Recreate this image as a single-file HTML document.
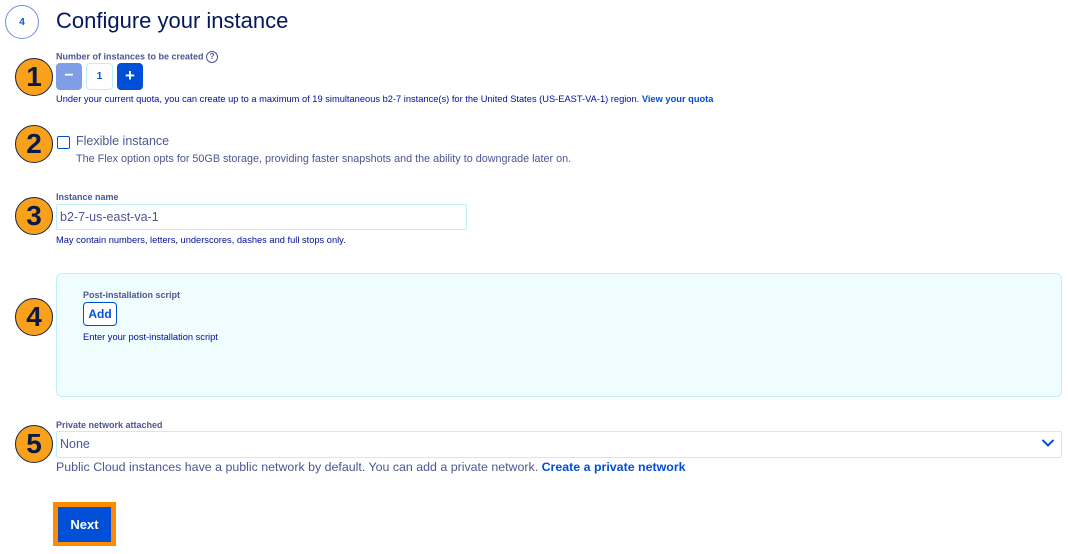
<!DOCTYPE html>
<html><head><meta charset="utf-8"><style>
body{margin:0;width:1068px;height:554px;background:#fff;font-family:"Liberation Sans",sans-serif;color:#4d5693;position:relative;overflow:hidden}
.a{position:absolute}
.badge{position:absolute;width:36px;height:36px;border:1px solid #1a2340;border-radius:50%;background:#f9a11b;color:#0b1a45;font-weight:bold;font-size:28px;display:flex;align-items:center;justify-content:center;left:15px}
.lbl{font-size:9px;font-weight:bold;color:#4d5693}
.sm{font-size:9.3px;color:#000e9c}
.link{color:#0050d7;font-weight:bold}
</style></head><body>
<div class="a" style="left:5px;top:5px;width:32px;height:32px;border:1px solid #6f8fe0;border-radius:50%;display:flex;align-items:center;justify-content:center;font-size:10px;font-weight:bold;color:#0050d7">4</div>
<div class="a" style="left:56px;top:8px;font-size:22px;color:#00185e">Configure your instance</div>

<div class="a lbl" style="left:56px;top:51px">Number of instances to be created <span style="display:inline-block;width:10px;height:10px;border:1px solid #4d5693;border-radius:50%;font-size:8px;text-align:center;line-height:10px;vertical-align:middle">?</span></div>
<div class="badge" style="top:58px">1</div>
<div class="a" style="left:56px;top:63px;width:26px;height:27px;background:#7f9ee6;border-radius:4px;color:#fff;text-align:center;line-height:26px;font-weight:bold;font-size:16px">−</div>
<div class="a" style="left:86px;top:63px;width:25px;height:25px;border:1px solid #bfeffa;border-radius:4px;text-align:center;line-height:25px;font-size:10px;color:#0050d7;font-weight:bold">1</div>
<div class="a" style="left:117px;top:63px;width:26px;height:27px;background:#0050d7;border-radius:4px;color:#fff;text-align:center;line-height:26px;font-weight:bold;font-size:17px">+</div>
<div class="a sm" style="left:56px;top:94px">Under your current quota, you can create up to a maximum of 19 simultaneous b2-7 instance(s) for the United States (US-EAST-VA-1) region. <span class="link">View your quota</span></div>

<div class="badge" style="top:125px">2</div>
<div class="a" style="left:57px;top:136px;width:11px;height:11px;border:1.5px solid #0050d7;border-radius:2px"></div>
<div class="a" style="left:76px;top:134px;font-size:12.5px">Flexible instance</div>
<div class="a" style="left:76px;top:153px;font-size:10.8px">The Flex option opts for 50GB storage, providing faster snapshots and the ability to downgrade later on.</div>

<div class="a lbl" style="left:56px;top:192px">Instance name</div>
<div class="badge" style="top:197px">3</div>
<div class="a" style="left:56px;top:204px;width:406px;height:24px;border:1px solid #bfeffa;border-radius:2px;font-size:12.5px;line-height:24px;padding-left:3px;color:#4d5693">b2-7-us-east-va-1</div>
<div class="a sm" style="left:56px;top:235px">May contain numbers, letters, underscores, dashes and full stops only.</div>

<div class="a" style="left:56px;top:273px;width:1004px;height:122px;border:1px solid #bfeffa;border-radius:6px;background:#f0fdff"></div>
<div class="badge" style="top:298px">4</div>
<div class="a lbl" style="left:83px;top:290px">Post-installation script</div>
<div class="a" style="left:83px;top:302px;width:32px;height:22px;border:1px solid #0050d7;border-radius:4px;background:#fff;color:#0050d7;font-weight:bold;font-size:12px;text-align:center;line-height:22px">Add</div>
<div class="a sm" style="left:83px;top:332px">Enter your post-installation script</div>

<div class="a lbl" style="left:56px;top:420px">Private network attached</div>
<div class="badge" style="top:425px">5</div>
<div class="a" style="left:56px;top:431px;width:1004px;height:25px;border:1px solid #bfeffa;border-radius:2px"></div>
<div class="a" style="left:60px;top:437px;font-size:12.5px">None</div>
<svg class="a" style="left:1041px;top:438px" width="14" height="10" viewBox="0 0 14 10"><path d="M1.5 2 L7 7.5 L12.5 2" fill="none" stroke="#0050d7" stroke-width="2"/></svg>
<div class="a" style="left:56px;top:460px;font-size:12.4px">Public Cloud instances have a public network by default. You can add a private network. <span class="link">Create a private network</span></div>

<div class="a" style="left:53px;top:502px;width:63px;height:44px;background:#ff8c00"></div>
<div class="a" style="left:58px;top:507px;width:53px;height:35px;background:#0050d7;color:#fff;font-weight:bold;font-size:13px;text-align:center;line-height:35px">Next</div>
</body></html>
